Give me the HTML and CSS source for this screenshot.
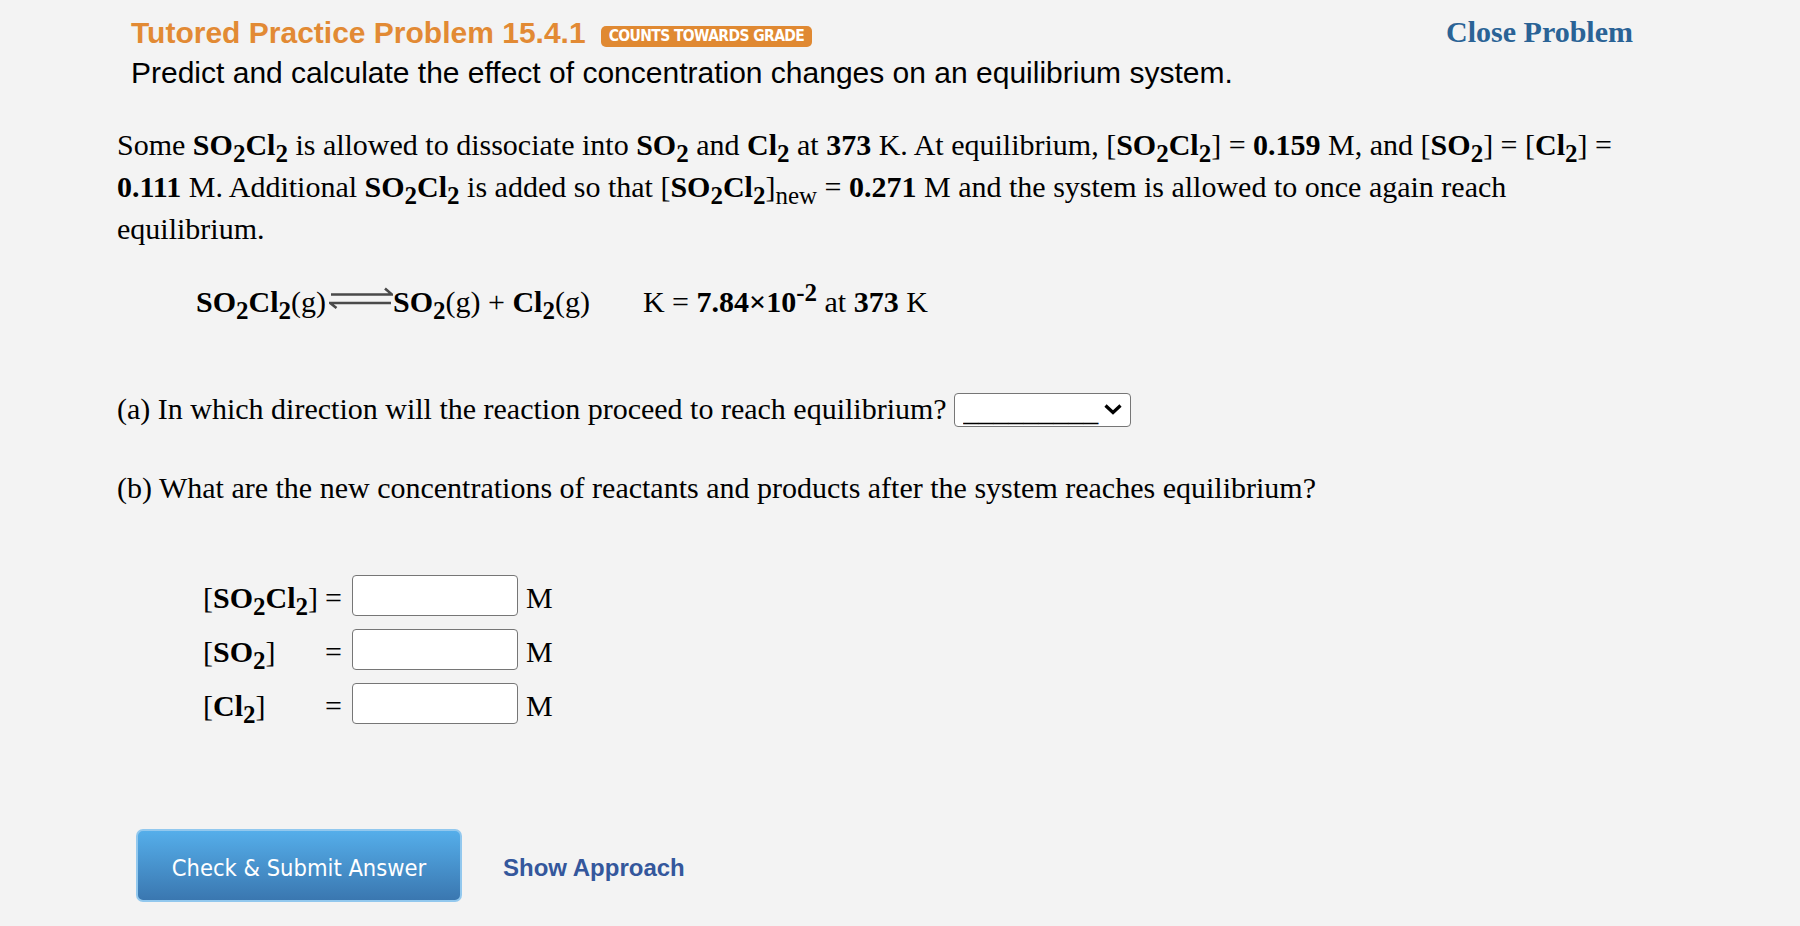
FILE: index.html
```html
<!DOCTYPE html>
<html lang="en">
<head>
<meta charset="utf-8">
<title>Tutored Practice Problem 15.4.1</title>
<link rel="stylesheet" href="styles.css">
</head>
<body>
<header class="top">
  <div class="title-block">
    <div class="title-row">
      <h1 class="title">Tutored Practice Problem 15.4.1</h1>
      <span class="badge">COUNTS TOWARDS GRADE</span>
    </div>
    <p class="subtitle">Predict and calculate the effect of concentration changes on an equilibrium system.</p>
  </div>
  <a class="close" href="#">Close Problem</a>
</header>
<main class="content">
  <p class="intro">Some <b>SO<sub>2</sub>Cl<sub>2</sub></b> is allowed to dissociate into <b>SO<sub>2</sub></b> and <b>Cl<sub>2</sub></b> at <b>373</b> K. At equilibrium, [<b>SO<sub>2</sub>Cl<sub>2</sub></b>] = <b>0.159</b> M, and [<b>SO<sub>2</sub></b>] = [<b>Cl<sub>2</sub></b>] = <b>0.111</b> M. Additional <b>SO<sub>2</sub>Cl<sub>2</sub></b> is added so that [<b>SO<sub>2</sub>Cl<sub>2</sub></b>]<sub>new</sub> = <b>0.271</b> M and the system is allowed to once again reach equilibrium.</p>

  <div class="equation"><b>SO<sub>2</sub>Cl<sub>2</sub></b>(g)<svg class="arrow" viewBox="0 0 64 22" width="64" height="22"><path d="M2 7.5H63L56 1.5" fill="none" stroke="#4a4a4a" stroke-width="2.6"/><path d="M62 16H1L7.5 21" fill="none" stroke="#4a4a4a" stroke-width="2.6"/></svg><b>SO<sub>2</sub></b>(g) + <b>Cl<sub>2</sub></b>(g)<span class="k">K = <b>7.84×10<sup>-2</sup></b> at <b>373</b> K</span></div>

  <div class="qa">(a) In which direction will the reaction proceed to reach equilibrium? <span class="select-wrap"><select class="dir"><option>_________</option></select><svg class="chev" viewBox="0 0 20 12" width="20" height="12"><path d="M2.5 2.5L10 9.5L17.5 2.5" fill="none" stroke="#000" stroke-width="3.2"/></svg></span></div>

  <p class="qb">(b) What are the new concentrations of reactants and products after the system reaches equilibrium?</p>

  <div class="answers">
    <span class="lbl">[<b>SO<sub>2</sub>Cl<sub>2</sub></b>]</span><span class="lbl">=</span><input type="text"><span class="lbl unit">M</span>
    <span class="lbl">[<b>SO<sub>2</sub></b>]</span><span class="lbl">=</span><input type="text"><span class="lbl unit">M</span>
    <span class="lbl">[<b>Cl<sub>2</sub></b>]</span><span class="lbl">=</span><input type="text"><span class="lbl unit">M</span>
  </div>

  <div class="actions">
    <button class="btn" type="button">Check &amp; Submit Answer</button>
    <a class="approach" href="#">Show Approach</a>
  </div>
</main>
</body>
</html>
```

FILE: styles.css
```css
body {
  margin: 0;
  background: #f3f3f3;
  font-family: "Liberation Serif", "Times New Roman", serif;
  color: #000;
}

.top {
  display: flex;
  justify-content: space-between;
  align-items: flex-start;
  padding: 15px 167px 0 131px;
}

.title-row {
  display: flex;
  align-items: flex-start;
  gap: 15px;
}

.title {
  margin: 0;
  font: 700 30px/36px "Liberation Sans", Arial, sans-serif;
  color: #e28a34;
}

.badge {
  margin-top: 11px;
  height: 21px;
  padding: 0 8px;
  border-radius: 5px;
  background: #e08932;
  color: #fff;
  font-family: "DejaVu Sans Condensed", "DejaVu Sans", sans-serif;
  font-stretch: condensed;
  font-weight: 700;
  font-size: 15.5px;
  letter-spacing: -0.6px;
  line-height: 21px;
  white-space: nowrap;
}

.subtitle {
  margin: 4px 0 0;
  font: 400 30px/36px "Liberation Sans", Arial, sans-serif;
}

.close {
  margin-top: 0;
  font: 700 30px/34px "Liberation Serif", "Times New Roman", serif;
  color: #2a6396;
  text-decoration: none;
}

.content {
  padding-left: 117px;
}

sub, sup {
  line-height: 0;
}

sub {
  vertical-align: -0.28em;
}

.intro {
  margin: 33px 0 0;
  width: 1525px;
  font-size: 30px;
  line-height: 42px;
}

.equation {
  margin: 31px 0 0 79px;
  font-size: 30px;
  line-height: 42px;
}

.arrow {
  vertical-align: 3px;
  margin: 0 0 0 3px;
}

.k {
  margin-left: 53px;
}

.qa {
  margin-top: 65px;
  font-size: 30px;
  line-height: 42px;
}

.select-wrap {
  position: relative;
  display: inline-block;
  vertical-align: top;
  margin-top: 5px;
}

.dir {
  appearance: none;
  -webkit-appearance: none;
  display: block;
  box-sizing: border-box;
  width: 177px;
  height: 34px;
  margin: 0;
  padding: 0 0 0 8px;
  border: 1px solid #767676;
  border-radius: 4px;
  background: #fff;
  color: #000;
  font: 30px "Liberation Serif", "Times New Roman", serif;
}

.chev {
  position: absolute;
  right: 8px;
  top: 10px;
  pointer-events: none;
}

.qb {
  margin: 37px 0 0;
  font-size: 30px;
  line-height: 42px;
}

.answers {
  margin: 59px 0 0 86px;
  display: grid;
  grid-template-columns: 122px 27px 166px auto;
  grid-auto-rows: 54px;
  align-items: center;
  justify-content: start;
  font-size: 30px;
  line-height: 42px;
}

.lbl {
  padding-top: 5px;
}

.answers input {
  box-sizing: border-box;
  width: 166px;
  height: 41px;
  margin: 0;
  padding: 0 6px;
  border: 1px solid #767676;
  border-radius: 4px;
  background: #fff;
  font: 24px "Liberation Serif", serif;
}

.unit {
  margin-left: 8px;
}

.actions {
  margin: 99px 0 0 19px;
  display: flex;
  align-items: center;
  gap: 41px;
}

.btn {
  box-sizing: border-box;
  width: 326px;
  height: 73px;
  padding: 4px 0 0;
  border: 2px solid #92c8ee;
  border-radius: 7px;
  background: linear-gradient(#55aeea, #3a77b0);
  color: #fff;
  font-family: "DejaVu Sans Condensed", "DejaVu Sans", sans-serif;
  font-stretch: condensed;
  font-size: 23.5px;
  cursor: pointer;
}

.approach {
  padding-top: 4px;
  font: 700 24px "Liberation Sans", Arial, sans-serif;
  color: #34579c;
  text-decoration: none;
}
```
